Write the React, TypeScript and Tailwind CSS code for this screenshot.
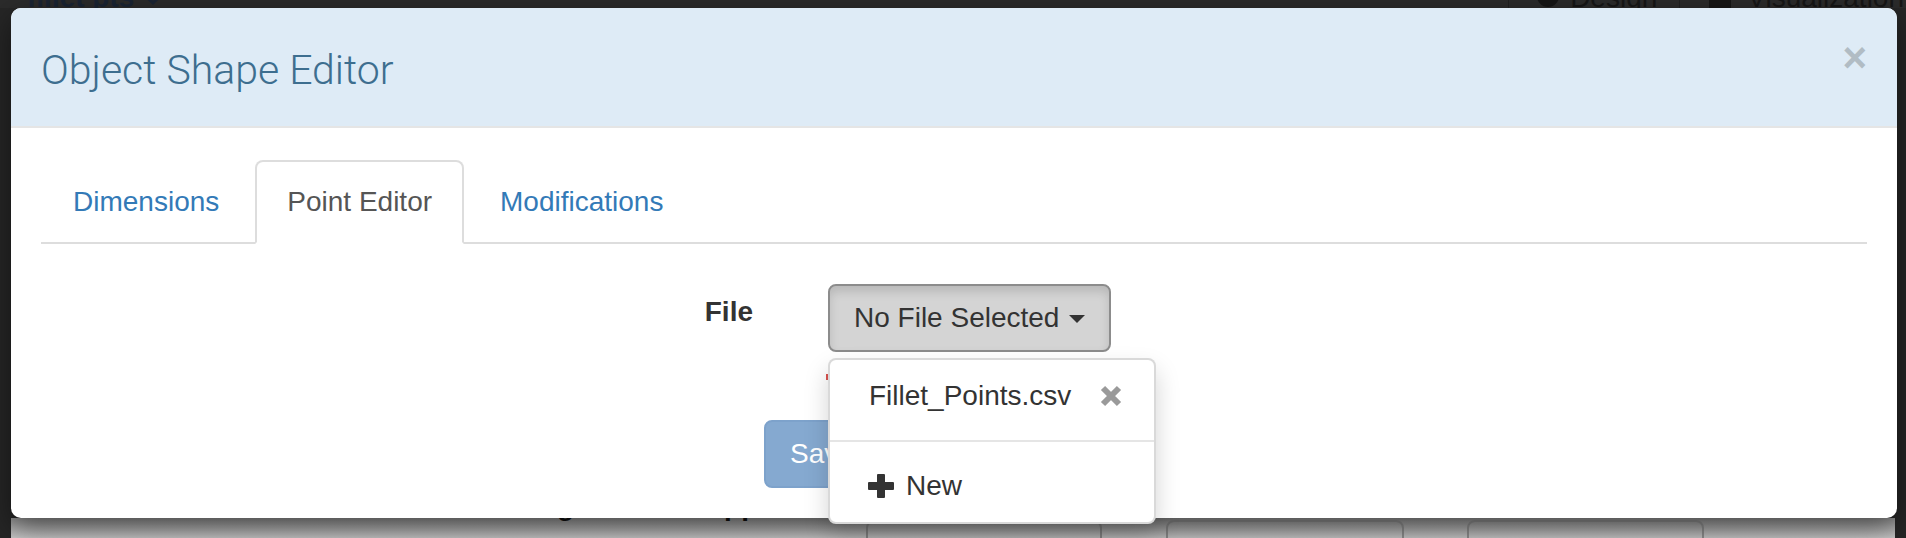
// Object Shape Editor modal (Point Editor tab, file dropdown open) over a dimmed page.

import React from "react";

const sans = "font-['Liberation_Sans','Helvetica_Neue',Arial,sans-serif]";

function RemoveIcon() {
  return (
    <svg width="22" height="22" viewBox="0 0 22 22" className="shrink-0">
      <path d="M3 3 L19 19 M19 3 L3 19" stroke="#9a9a9a" strokeWidth="6" strokeLinecap="butt" />
    </svg>
  );
}

function PlusIcon() {
  return (
    <svg width="26" height="24" viewBox="0 0 26 24" className="shrink-0">
      <rect x="0" y="8" width="26" height="8" rx="1" fill="#333" />
      <rect x="9" y="0" width="8" height="24" rx="1" fill="#333" />
    </svg>
  );
}

function Tab({ label, active }: { label: string; active?: boolean }) {
  return (
    <div
      className={
        active
          ? "-mb-[2px] mr-[4px] rounded-t-[8px] border-2 border-[#ddd] border-b-transparent bg-white px-[30px] py-[20px] leading-[40px] text-[#555]"
          : "-mb-[2px] mr-[4px] rounded-t-[8px] border-2 border-transparent px-[30px] py-[20px] leading-[40px] text-[#337ab7]"
      }
    >
      {label}
    </div>
  );
}

function BackgroundPage() {
  return (
    <div className="flex h-[538px] flex-col bg-[#262626]">
      {/* navbar, almost fully hidden by the modal */}
      <div className="flex h-[8px] items-end overflow-hidden bg-[#2b2b2b]">
        <div className={`ml-[27px] flex items-end text-[28px] font-bold leading-[28px] text-[#1a2433] ${sans}`}>
          <span className="-mb-[4px]">fillet pts</span>
          <svg width="18" height="12" viewBox="0 0 18 12" className="mb-[2px] ml-[10px]">
            <path d="M2 2 L9 9 L16 2" stroke="#1a2433" strokeWidth="3" fill="none" />
          </svg>
        </div>
        <div className="ml-auto flex h-full items-end">
          <div className="h-full w-[1px] bg-[#202020]" />
          <span className="mb-[1px] ml-[28px] h-[22px] w-[22px] rounded-full bg-[#161616]" />
          <span className={`-mb-[4px] ml-[11px] text-[28px] leading-[28px] text-[#161616] ${sans}`}>Design</span>
          <div className="ml-[22px] h-full w-[1px] bg-[#202020]" />
          <span className="ml-[29px] h-[20px] w-[22px] bg-[#161616]" />
          <span className={`-mb-[4px] ml-[16px] mr-[2px] text-[28px] leading-[28px] text-[#161616] ${sans}`}>Visualization</span>
        </div>
      </div>
      <div className="flex-1" />
      {/* page content under the modal */}
      <div className="mx-[11px] h-[20px] overflow-hidden bg-gradient-to-b from-[#939393] to-[#c8c8c8]">
        <div className={`relative -mt-[26px] flex text-[28px] font-bold leading-[28px] text-[#111] ${sans}`}>
          <span className="ml-[546px]">g</span>
          <span className="ml-[150px]">pp</span>
          <span className="ml-[374px]">y</span>
        </div>
        <div className="flex">
          <div className="ml-[855px] h-[30px] w-[236px] rounded-[8px] border-2 border-[#8e8e8e]" />
          <div className="ml-[64px] h-[30px] w-[238px] rounded-[8px] border-2 border-[#8e8e8e]" />
          <div className="ml-[63px] h-[30px] w-[237px] rounded-[8px] border-2 border-[#8e8e8e]" />
        </div>
      </div>
    </div>
  );
}

export default function App() {
  return (
    <div className="relative h-[538px] w-[1906px] overflow-hidden">
      <BackgroundPage />

      {/* modal */}
      <div className={`absolute left-[11px] top-[8px] h-[510px] w-[1886px] rounded-[10px] bg-white text-[28px] text-[#333] shadow-[0_10px_30px_rgba(0,0,0,0.5)] ${sans}`}>
        <div className="flex h-[120px] items-center justify-between rounded-t-[10px] border-b-2 border-[#e5e5e5] bg-[#deebf6] pl-[30px] pr-[30px]">
          <h4 className="mt-[6px] font-['Roboto','Helvetica_Neue',sans-serif] text-[41px] font-light leading-[50px] text-[#3d6e8f]">
            Object Shape Editor
          </h4>
          <span className="-mt-[18px] text-[42px] font-bold leading-[42px] text-[#b1bcc4]">×</span>
        </div>

        <div className="px-[30px] pt-[32px]">
          <div className="flex border-b-2 border-[#ddd]">
            <Tab label="Dimensions" />
            <Tab label="Point Editor" active />
            <Tab label="Modifications" />
          </div>

          <div className="mt-[40px] flex items-start">
            <label className="w-[712px] pt-[8px] text-right font-bold leading-[40px]">File</label>
            <div className="relative ml-[75px]">
              <button className="flex items-center rounded-[8px] border-2 border-[#8c8c8c] bg-[#d4d4d4] px-[24px] py-[12px] leading-[40px] text-[#333] shadow-[inset_0_6px_10px_rgba(0,0,0,0.125)]">
                No File Selected
                <span className="ml-[10px] mt-[2px] h-0 w-0 border-x-[8px] border-t-[8px] border-x-transparent border-t-[#333]" />
              </button>
              <span className="absolute -left-[2px] top-[90px] h-[6px] w-[3px] bg-[#d9534f]" />
              <div className="absolute left-0 top-full z-10 mt-[6px] w-[328px] rounded-[8px] border-2 border-[rgba(0,0,0,0.15)] bg-white py-[10px] shadow-[0_12px_24px_rgba(0,0,0,0.175)]">
                <div className="flex items-center justify-between py-[6px] pl-[39px] pr-[32px] leading-[40px]">
                  <span>Fillet_Points.csv</span>
                  <RemoveIcon />
                </div>
                <div className="my-[18px] h-[2px] bg-[#e5e5e5]" />
                <div className="flex items-center py-[6px] pl-[38px] leading-[40px]">
                  <PlusIcon />
                  <span className="ml-[12px]">New</span>
                </div>
              </div>
            </div>
          </div>

          <div className="mt-[68px] flex">
            <button className="ml-[723px] rounded-[8px] border-2 border-[#7da2cb] bg-[#85a9d0] px-[24px] py-[12px] leading-[40px] text-white">
              Save
            </button>
          </div>
        </div>
      </div>
    </div>
  );
}
